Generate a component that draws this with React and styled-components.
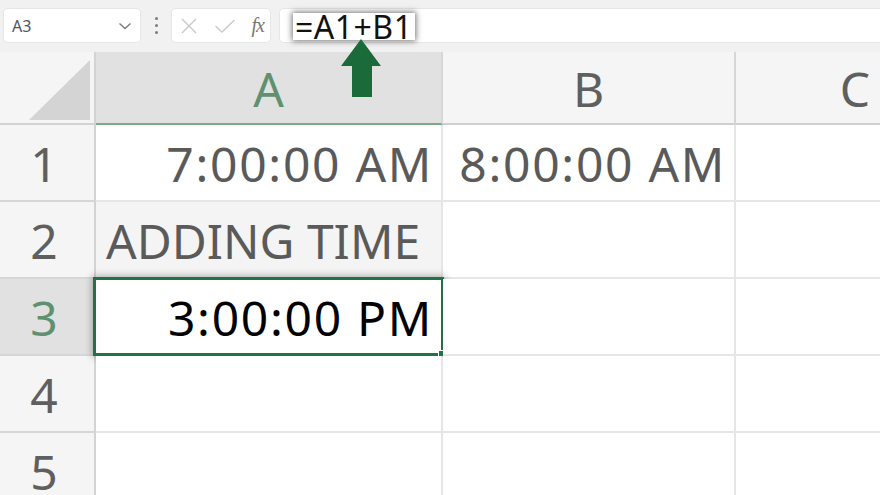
import React from "react";
import styled, { createGlobalStyle } from "styled-components";

const GlobalStyle = createGlobalStyle`
    html, body {
        margin: 0;
        padding: 0;
        background: #ffffff;
        overflow: hidden;
    }
    body {
        font-family: "Noto Sans", "Open Sans", sans-serif;
    }
`;

const columns = [
    { name: "A", selected: true },
    { name: "B" },
    { name: "C" },
];

const rows = [
    { n: 1, cells: [{ text: "7:00:00 AM", align: "right", time: true }, { text: "8:00:00 AM", align: "right", time: true }, {}] },
    { n: 2, cells: [{ text: "ADDING TIME", align: "left", shaded: true }, {}, {}] },
    { n: 3, selected: true, cells: [{ text: "3:00:00 PM", align: "right", time: true, active: true }, {}, {}] },
    { n: 4, cells: [{}, {}, {}] },
    { n: 5, cells: [{}, {}, {}] },
];

function App() {
    return (
        <Page>
            <GlobalStyle />
            <Toolbar>
                <NameBox>
                    <CellRef>A3</CellRef>
                    <svg width="14" height="8" viewBox="0 0 14 8">
                        <path d="M1.5 1.5 L7 6.5 L12.5 1.5" fill="none" stroke="#7a7a7a" strokeWidth="1.4" />
                    </svg>
                </NameBox>
                <Dots>
                    <span />
                    <span />
                    <span />
                </Dots>
                <FxGroup>
                    <svg width="18" height="18" viewBox="0 0 18 18">
                        <path d="M2 2 L16 16 M16 2 L2 16" stroke="#c9c9c9" strokeWidth="1.4" />
                    </svg>
                    <svg width="22" height="16" viewBox="0 0 22 16">
                        <path d="M1.5 8 L8 14 L20.5 2" fill="none" stroke="#c9c9c9" strokeWidth="1.4" />
                    </svg>
                    <FxLabel>fx</FxLabel>
                </FxGroup>
                <FormulaBar>
                    <FormulaText>=A1+B1</FormulaText>
                </FormulaBar>
            </Toolbar>
            <Sheet>
                <Corner>
                    <svg width="94" height="71" viewBox="0 0 94 71">
                        <polygon points="29,68 90,68 90,8" fill="#d4d4d4" />
                    </svg>
                </Corner>
                {columns.map((col) => (
                    <ColHeader key={col.name} $selected={col.selected}>
                        {col.name}
                    </ColHeader>
                ))}
                {rows.map((row) => (
                    <React.Fragment key={row.n}>
                        <RowHeader $selected={row.selected}>{row.n}</RowHeader>
                        {row.cells.map((cell, i) => (
                            <Cell
                                key={i}
                                $align={cell.align}
                                $shaded={cell.shaded}
                                $active={cell.active}
                                $time={cell.time}
                            >
                                {cell.text}
                                {cell.active && (
                                    <ActiveFrame>
                                        <FillHandle />
                                    </ActiveFrame>
                                )}
                            </Cell>
                        ))}
                    </React.Fragment>
                ))}
            </Sheet>
            <Arrow width="40" height="58" viewBox="0 0 40 58">
                <polygon points="20,0 40,27 31,27 31,58 11,58 11,27 0,27" fill="#1b6b3a" />
            </Arrow>
        </Page>
    );
}

const Page = styled.div`
    position: relative;
    width: 880px;
    height: 495px;
    overflow: hidden;
    display: flex;
    flex-direction: column;
`;

const Toolbar = styled.div`
    height: 52px;
    flex-shrink: 0;
    box-sizing: border-box;
    padding: 9px 0 10px 4px;
    background: #f1f1f1;
    display: flex;
    align-items: stretch;
`;

const NameBox = styled.div`
    width: 136px;
    background: #ffffff;
    border-radius: 4px;
    box-shadow: 0 0 0 1px #e6e6e6;
    display: flex;
    align-items: center;
    justify-content: space-between;
    padding: 0 8px 0 8px;
    box-sizing: border-box;
`;

const CellRef = styled.span`
    font-family: "Noto Sans", sans-serif;
    font-size: 16px;
    color: #4b5468;
`;

const Dots = styled.div`
    width: 32px;
    display: flex;
    flex-direction: column;
    align-items: center;
    justify-content: center;
    gap: 4px;
    span {
        width: 3px;
        height: 3px;
        border-radius: 50%;
        background: #7c7c7c;
    }
`;

const FxGroup = styled.div`
    width: 98px;
    background: #ffffff;
    border-radius: 4px;
    box-shadow: 0 0 0 1px #e6e6e6;
    display: flex;
    align-items: center;
    justify-content: space-between;
    padding: 0 6px 0 8px;
    box-sizing: border-box;
`;

const FxLabel = styled.span`
    font-family: "Liberation Serif", "DejaVu Serif", serif;
    font-style: italic;
    font-size: 20px;
    color: #777777;
    letter-spacing: -1px;
`;

const FormulaBar = styled.div`
    flex: 1;
    margin-left: 10px;
    background: #ffffff;
    border-radius: 4px 0 0 4px;
    box-shadow: 0 0 0 1px #e6e6e6;
    display: flex;
    align-items: center;
    padding-left: 13px;
`;

const FormulaText = styled.span`
    font-family: "Noto Sans", sans-serif;
    font-size: 32px;
    line-height: 27px;
    height: 27px;
    padding: 0 3px 0 2px;
    letter-spacing: 0.5px;
    color: #111111;
    background: #ffffff;
    box-shadow: 0 0 6px 1px rgba(0, 0, 0, 0.55);
    margin-top: 2px;
`;

const Sheet = styled.div`
    flex: 1;
    display: grid;
    grid-template-columns: 96px 347px 293px 240px;
    grid-template-rows: 73px;
    grid-auto-rows: 77px;
    font-family: "Noto Sans", sans-serif;
`;

const Corner = styled.div`
    background: #f5f5f5;
    border-right: 2px solid #d3d3d3;
    border-bottom: 2px solid #d3d3d3;
    box-sizing: border-box;
    svg {
        display: block;
    }
`;

const ColHeader = styled.div`
    box-sizing: border-box;
    background: ${(p) => (p.$selected ? "#e1e1e1" : "#f5f5f5")};
    color: ${(p) => (p.$selected ? "#5f9170" : "#5f5f5f")};
    border-right: 2px solid #d6d6d6;
    border-bottom: 2px solid ${(p) => (p.$selected ? "#7aab89" : "#cfcfcf")};
    display: flex;
    align-items: center;
    justify-content: center;
    font-size: 48px;
    padding-top: 2px;
`;

const RowHeader = styled.div`
    box-sizing: border-box;
    background: ${(p) => (p.$selected ? "#e1e1e1" : "#f5f5f5")};
    color: ${(p) => (p.$selected ? "#5f9170" : "#5f5f5f")};
    border-right: 2px solid #d3d3d3;
    border-bottom: 2px solid #d6d6d6;
    display: flex;
    align-items: center;
    justify-content: center;
    padding-right: 6px;
    padding-top: 2px;
    font-size: 48px;
`;

const Cell = styled.div`
    position: relative;
    box-sizing: border-box;
    background: ${(p) => (p.$shaded ? "#f4f4f4" : "#ffffff")};
    color: ${(p) => (p.$active ? "#000000" : "#5a5a5a")};
    border-right: 2px solid #e6e6e6;
    border-bottom: 2px solid #e6e6e6;
    display: flex;
    align-items: center;
    justify-content: ${(p) => (p.$align === "left" ? "flex-start" : "flex-end")};
    padding: 2px ${(p) => (p.$time ? "8px" : "10px")} 0 10px;
    font-size: 48px;
    letter-spacing: ${(p) => (p.$time ? "1.7px" : "0")};
    white-space: nowrap;
`;

const ActiveFrame = styled.div`
    position: absolute;
    top: -2px;
    left: -3px;
    right: -3px;
    bottom: -2px;
    border: 3px solid #217346;
    box-shadow: 0 0 7px 1px rgba(0, 0, 0, 0.3);
    pointer-events: none;
`;

const FillHandle = styled.div`
    position: absolute;
    right: -5px;
    bottom: -5px;
    width: 6px;
    height: 6px;
    background: #217346;
    border: 1px solid #ffffff;
`;

const Arrow = styled.svg`
    position: absolute;
    left: 341px;
    top: 39px;
`;

export default App;
